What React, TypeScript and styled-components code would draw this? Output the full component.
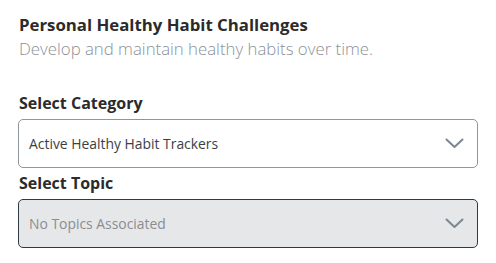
import React from "react";
import styled, { createGlobalStyle } from "styled-components";

const Global = createGlobalStyle`
  html, body { margin: 0; padding: 0; background: #fff; }
  body { font-family: "Open Sans", "Noto Sans", sans-serif; }
  * { box-sizing: border-box; }
`;

const Page = styled.div`
  padding: 13px 18px 0 18px;
  width: 496px;
`;

const Header = styled.header`
  display: flex;
  flex-direction: column;
  padding-left: 1px;
`;

const Title = styled.h1`
  margin: 0;
  font-size: 16.8px;
  line-height: 24px;
  font-weight: 700;
  color: #2b2b2b;
`;

const Subtitle = styled.p`
  margin: 0;
  font-size: 16.8px;
  line-height: 24px;
  font-weight: 300;
  color: #8a9198;
`;

const Form = styled.div`
  display: flex;
  flex-direction: column;
  gap: 3px;
  margin-top: 30px;
`;

const Field = styled.div`
  display: flex;
  flex-direction: column;
`;

const Label = styled.label`
  font-size: 16px;
  line-height: 24px;
  font-weight: 700;
  color: #2b2b2b;
  padding-left: 1px;
  margin-bottom: 4px;
`;

const SelectBox = styled.div<{ $disabled?: boolean }>`
  display: flex;
  align-items: center;
  justify-content: space-between;
  height: 49px;
  width: 460px;
  padding: 0 13px 0 10px;
  border: 1px solid ${(p) => (p.$disabled ? "#2c3b47" : "#8e979f")};
  border-radius: 5px;
  background: ${(p) => (p.$disabled ? "#e6e7e9" : "#fff")};
  font-size: 13.9px;
  color: ${(p) => (p.$disabled ? "#8a8d91" : "#3a3f44")};
`;

const Chevron = () => (
  <svg width="19" height="11" viewBox="0 0 19 11" fill="none">
    <path d="M1.5 1.5 L9.5 9 L17.5 1.5" stroke="#7b8791" strokeWidth="2" strokeLinecap="round" strokeLinejoin="round" />
  </svg>
);

export default function App() {
  return (
    <>
      <Global />
      <Page>
        <Header>
          <Title>Personal Healthy Habit Challenges</Title>
          <Subtitle>Develop and maintain healthy habits over time.</Subtitle>
        </Header>
        <Form>
          <Field>
            <Label>Select Category</Label>
            <SelectBox>
              <span>Active Healthy Habit Trackers</span>
              <Chevron />
            </SelectBox>
          </Field>
          <Field>
            <Label>Select Topic</Label>
            <SelectBox $disabled>
              <span>No Topics Associated</span>
              <Chevron />
            </SelectBox>
          </Field>
        </Form>
      </Page>
    </>
  );
}
